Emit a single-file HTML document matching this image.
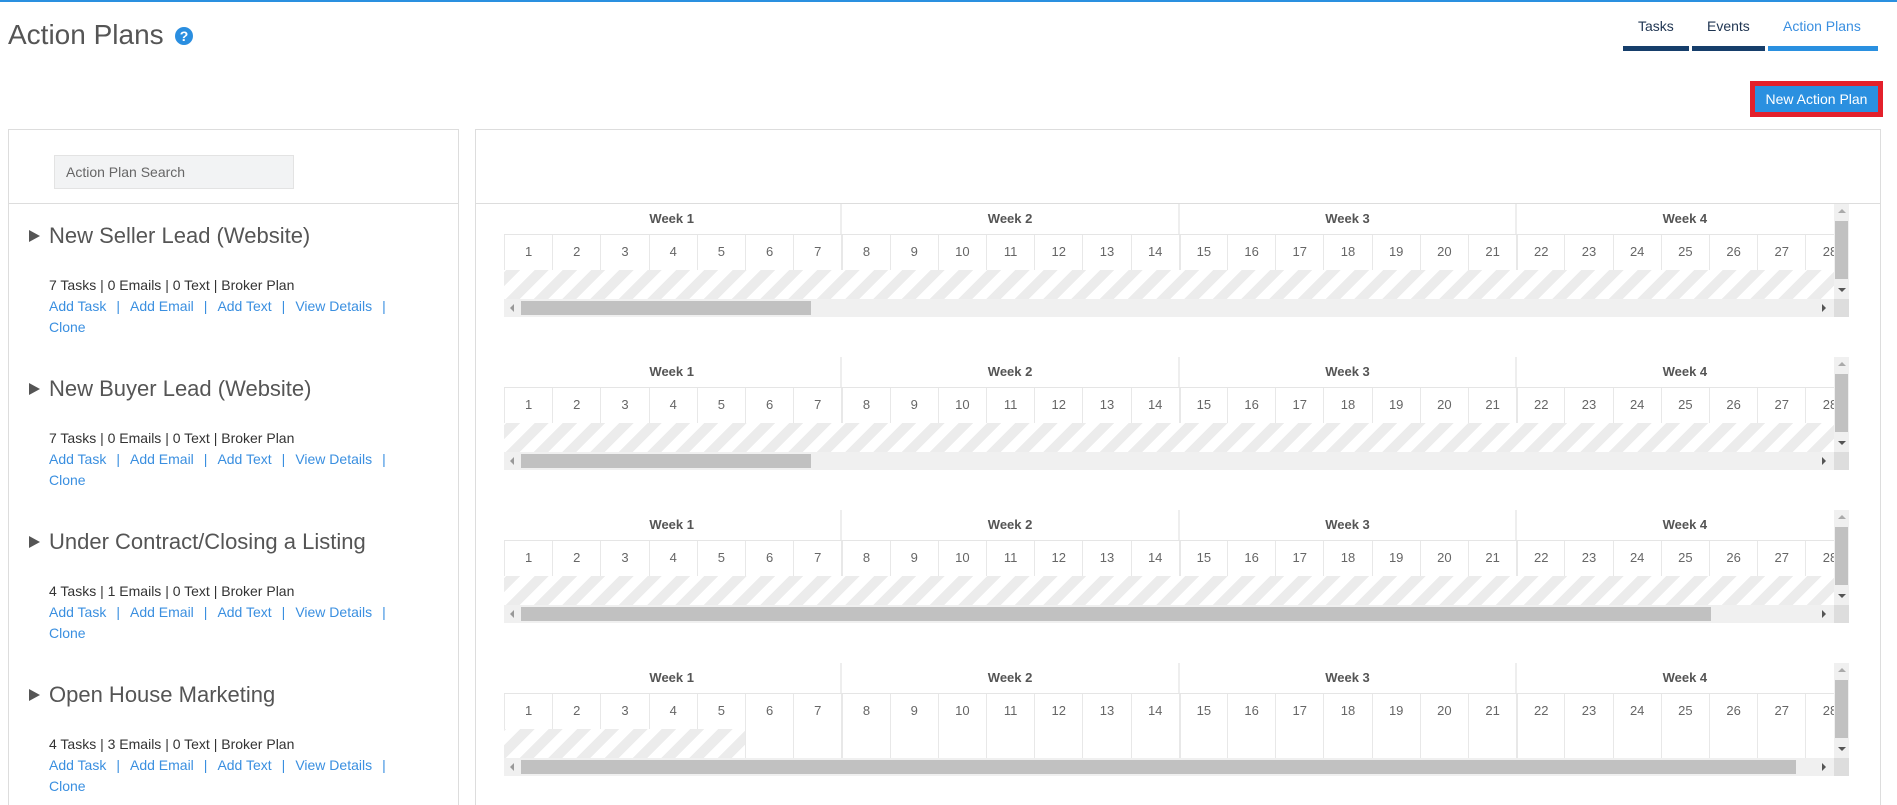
<!DOCTYPE html>
<html style="overflow:hidden;height:805px"><head><meta charset="utf-8"><style>
*{box-sizing:border-box;margin:0;padding:0}
body{width:1897px;height:805px;overflow:hidden;background:#fff;font-family:"Liberation Sans",Arial,sans-serif;position:relative}
.abs{position:absolute}
.topline{left:0;top:0;width:1897px;height:2px;background:#2a90e0}
.title{left:8px;top:16px;font-size:28px;color:#555;line-height:38px}
.help{left:175px;top:27px;width:18px;height:18px;border-radius:50%;background:#2a8ee0;color:#fff;font-size:14px;font-weight:bold;text-align:center;line-height:18px}
.tab{top:16px;font-size:14px;color:#1f3552;line-height:20px}
.bar{top:46px;height:5px;background:#163e6b}
.btn{left:1750px;top:81px;width:133px;height:36px;border:5px solid #e3202b;background:#2a90e0;color:#fff;font-size:14px;text-align:center;line-height:26px}
.lp{left:8px;top:129px;width:451px;height:700px;border:1px solid #ddd}
.rp{left:475px;top:129px;width:1406px;height:700px;border:1px solid #ddd}
.search{left:54px;top:155px;width:240px;height:34px;background:#f2f3f4;border:1px solid #e3e3e3;font-size:14px;color:#666;padding-left:11px;line-height:32px}
.hr{height:1px;background:#ddd}
.it{left:29px}
.it .t{font-size:22px;color:#555;line-height:30px;position:relative;padding-left:20px}
.it .t:before{content:"";position:absolute;left:0;top:9px;border-left:11px solid #555;border-top:6px solid transparent;border-bottom:6px solid transparent}
.it .s{font-size:14px;color:#333;line-height:21px;padding-left:20px;margin-top:24px}
.it .l{font-size:14px;color:#3a8fe0;line-height:21px;padding-left:20px;width:420px}
.it .l span{color:#3a8fe0;margin:0 10px}
.chart{left:504px;width:1345px;height:113px;overflow:hidden}
.wk{position:absolute;top:0;height:30px;font-size:13px;font-weight:bold;color:#555;text-align:center;line-height:30px;border-left:2px solid #eee}
.days{position:absolute;top:30px;left:0;height:65px;width:1360px;border-top:1px solid #e5e5e5}
.d{position:absolute;top:0;width:48.2px;height:65px;border-left:1px solid #e8e8e8;font-size:13px;color:#666;text-align:center;line-height:34px}
.stripe{position:absolute;top:35px;left:0;height:30px;background:repeating-linear-gradient(-45deg,#fff 0 10px,#ececec 10px 20px)}
.hs{position:absolute;top:95px;left:0;width:1330px;height:18px;background:#f0f0f0}
.th{position:absolute;top:2px;left:17px;height:14px;background:#c1c1c1}
.vs{position:absolute;top:0;left:1330px;width:15px;height:95px;background:#f0f0f0}
.vth{position:absolute;top:17px;left:1px;width:13px;height:58px;background:#c1c1c1}
.corner{position:absolute;top:95px;left:1330px;width:15px;height:18px;background:#ddd}
.ar{position:absolute;width:0;height:0}
</style></head><body>
<div class="abs topline"></div>
<div class="abs title">Action Plans</div>
<div class="abs help">?</div>
<div class="abs tab" style="left:1638px">Tasks</div>
<div class="abs tab" style="left:1707px">Events</div>
<div class="abs tab" style="left:1783px;color:#3a8fe0">Action Plans</div>
<div class="abs bar" style="left:1623px;width:66px"></div>
<div class="abs bar" style="left:1692px;width:73px"></div>
<div class="abs bar" style="left:1768px;width:110px;background:#2a90e0"></div>
<div class="abs btn">New Action Plan</div>

<div class="abs lp"></div>
<div class="abs search">Action Plan Search</div>
<div class="abs hr" style="left:9px;top:203px;width:449px"></div>
<div class="abs rp"></div>
<div class="abs hr" style="left:476px;top:203px;width:1404px"></div>

<div class="abs it" style="top:221px"><div class="t">New Seller Lead (Website)</div><div class="s">7 Tasks | 0 Emails | 0 Text | Broker Plan</div><div class="l">Add Task<span>|</span>Add Email<span>|</span>Add Text<span>|</span>View Details<span>|</span><br>Clone</div></div>
<div class="abs it" style="top:374px"><div class="t">New Buyer Lead (Website)</div><div class="s">7 Tasks | 0 Emails | 0 Text | Broker Plan</div><div class="l">Add Task<span>|</span>Add Email<span>|</span>Add Text<span>|</span>View Details<span>|</span><br>Clone</div></div>
<div class="abs it" style="top:527px"><div class="t">Under Contract/Closing a Listing</div><div class="s">4 Tasks | 1 Emails | 0 Text | Broker Plan</div><div class="l">Add Task<span>|</span>Add Email<span>|</span>Add Text<span>|</span>View Details<span>|</span><br>Clone</div></div>
<div class="abs it" style="top:680px"><div class="t">Open House Marketing</div><div class="s">4 Tasks | 3 Emails | 0 Text | Broker Plan</div><div class="l">Add Task<span>|</span>Add Email<span>|</span>Add Text<span>|</span>View Details<span>|</span><br>Clone</div></div>

<div id="charts"></div>
<script>
var tops=[204,357,510,663],thumbs=[290,290,1190,1275],stripes=[1330,1330,1330,241];
var W=48.2,h='';
for(var c=0;c<4;c++){
 h+='<div class="abs chart" style="top:'+tops[c]+'px">';
 for(var w=0;w<4;w++)h+='<div class="wk" style="left:'+(w*7*W-1)+'px;width:'+(7*W)+'px;'+(w==0?'border-left:none':'')+'">Week '+(w+1)+'</div>';
 h+='<div class="days">';
 for(var d=0;d<28;d++)h+='<div class="d" style="left:'+(d*W)+'px;'+(d%7==0&&d>0?'border-left:2px solid #e8e8e8':'')+'">'+(d+1)+'</div>';
 h+='<div class="stripe" style="width:'+stripes[c]+'px"></div></div>';
 h+='<div class="hs"><div class="ar" style="left:6px;top:5px;border-right:4px solid #999;border-top:4px solid transparent;border-bottom:4px solid transparent"></div><div class="th" style="width:'+thumbs[c]+'px"></div><div class="ar" style="left:1318px;top:5px;border-left:4px solid #555;border-top:4px solid transparent;border-bottom:4px solid transparent"></div></div>';
 h+='<div class="vs"><div class="ar" style="left:4px;top:5px;border-bottom:4px solid #aaa;border-left:4px solid transparent;border-right:4px solid transparent"></div><div class="vth"></div><div class="ar" style="left:4px;top:84px;border-top:4px solid #555;border-left:4px solid transparent;border-right:4px solid transparent"></div></div><div class="corner"></div>';
 h+='</div>';
}
document.getElementById('charts').innerHTML=h;
</script>
</body></html>
